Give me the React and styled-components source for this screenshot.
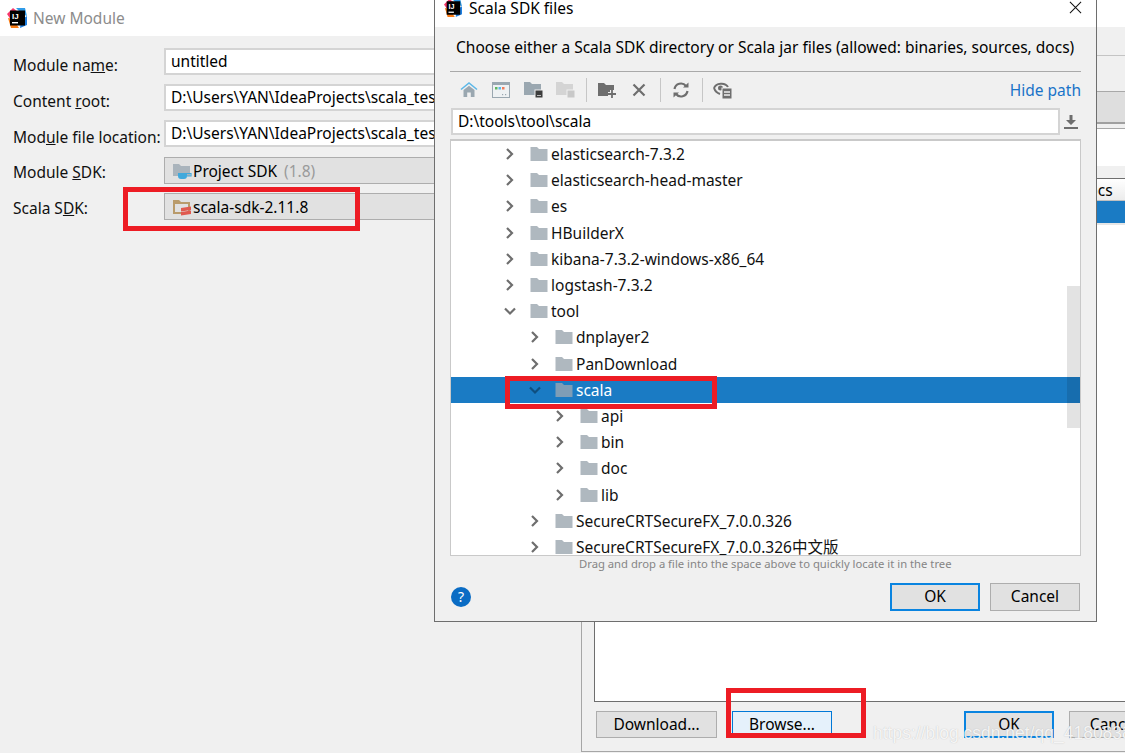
import React from 'react'
import styled, { createGlobalStyle } from 'styled-components'

const GlobalStyle = createGlobalStyle`
  html, body {
    margin: 0;
    padding: 0;
    background: #f0f0f0;
  }
  body {
    font-family: "Noto Sans", "Noto Sans CJK SC", sans-serif;
    font-size: 15.5px;
    color: #000;
  }
`

const Desktop = styled.div`
  position: relative;
  width: 1125px;
  height: 753px;
  overflow: hidden;
`

const Window = styled.div`
  position: absolute;
  display: flex;
  flex-direction: column;
  box-sizing: border-box;
  background: #f0f0f0;
`

const LeftWindow = styled(Window)`
  left: 0;
  top: 0;
  width: 600px;
  height: 753px;
`

const BackWindow = styled(Window)`
  left: 581px;
  top: 0;
  width: 700px;
  height: 752px;
  border-left: 1px solid #a6a6a6;
  border-bottom: 1px solid #a6a6a6;
`

const ModalWindow = styled(Window)`
  left: 434px;
  top: 0;
  width: 663px;
  height: 622px;
  border: 1px solid #6e6e6e;
  border-top: none;
`

const TitleBar = styled.div`
  box-sizing: border-box;
  display: flex;
  align-items: center;
  flex: none;
  height: ${(p) => p.$height}px;
  padding-left: ${(p) => p.$inset}px;
  padding-bottom: ${(p) => p.$lift || 0}px;
  gap: ${(p) => p.$gap || 6}px;
  background: #fff;
  color: ${(p) => p.$color || '#000'};
`

const CloseGlyph = styled.svg`
  margin-left: auto;
  margin-right: 14px;
`

const Form = styled.div`
  display: grid;
  grid-template-columns: 151px 1fr;
  grid-auto-rows: 27px;
  row-gap: 9.2px;
  padding: 12px 0 0 13px;
`

const Label = styled.label`
  padding-top: ${(p) => (p.$tight ? 4.5 : 6)}px;
  white-space: nowrap;
  color: #111;
`

const TextField = styled.div`
  box-sizing: border-box;
  display: flex;
  align-items: center;
  padding-left: 5px;
  padding-bottom: 1px;
  background: #fff;
  border: 2px solid #d4d4d4;
  white-space: nowrap;
`

const Combo = styled.div`
  box-sizing: border-box;
  display: flex;
  align-items: center;
  gap: 1px;
  padding: 1px 0 0 7px;
  background: #e1e1e1;
  border: 1px solid #adadad;
  white-space: nowrap;
`

const Muted = styled.span`
  color: #9a9a9a;
  margin-left: 6px;
`

const Instruction = styled.div`
  flex: none;
  height: 45px;
  display: flex;
  align-items: center;
  padding: 0 0 4px 6px;
  box-sizing: border-box;
  border-bottom: 1px solid #a9a9a9;
  white-space: nowrap;
`

const ModalBody = styled.div`
  display: flex;
  flex-direction: column;
  flex: 1;
  padding: 0 15px;
`

const Toolbar = styled.div`
  flex: none;
  display: flex;
  align-items: center;
  height: 36px;
  padding-left: 3px;
`

const ToolButton = styled.span`
  display: flex;
  align-items: center;
  justify-content: center;
  width: 32px;
  height: 24px;
`

const ToolSeparator = styled.span`
  width: 1px;
  height: 24px;
  margin: 0 4px 0 5px;
  background: #c6c6c6;
`

const LinkText = styled.a`
  margin-left: auto;
  color: #1a73c8;
`

const PathRow = styled.div`
  flex: none;
  display: flex;
  align-items: center;
  height: 27px;
  padding-left: 1px;
`

const PathField = styled(TextField)`
  width: 609px;
  height: 27px;
  padding-left: 5px;
`

const PathAction = styled.span`
  display: flex;
  margin-left: 3px;
`

const Tree = styled.div`
  position: relative;
  flex: none;
  box-sizing: border-box;
  height: 417px;
  margin-top: 4px;
  border: 1px solid #c9c9c9;
  border-top-width: 2px;
  background: #fff;
  overflow: hidden;
`

const Row = styled.div`
  display: flex;
  align-items: center;
  height: 26.2px;
  padding-left: ${(p) => 49 + p.$level * 25}px;
  background: ${(p) => (p.$selected ? '#1a7bc4' : 'transparent')};
  color: ${(p) => (p.$selected ? '#fff' : '#111')};
  white-space: nowrap;
`

const RowIcons = styled.span`
  display: flex;
  align-items: center;
  gap: 10px;
  margin-right: 3px;
`

const ScrollThumb = styled.div`
  position: absolute;
  right: 0;
  top: 145px;
  width: 13px;
  height: 142px;
  background: rgba(0, 0, 0, 0.11);
`

const Hint = styled.div`
  flex: none;
  height: 16px;
  padding-left: 129px;
  font-size: 11.25px;
  line-height: 16px;
  color: #858585;
  white-space: nowrap;
`

const Footer = styled.div`
  flex: none;
  display: flex;
  align-items: center;
  margin-top: 11px;
  padding: 0 1px;
`

const Button = styled.button`
  box-sizing: border-box;
  width: ${(p) => p.$width || 90}px;
  height: ${(p) => p.$height || 27}px;
  padding: 0 0 2px;
  margin-left: ${(p) => p.$gap || 0}px;
  font: inherit;
  color: #000;
  background: ${(p) => (p.$hover ? '#e5f1fb' : '#e1e1e1')};
  border: ${(p) => (p.$primary ? '2px solid #0a84e0' : p.$hover ? '1px solid #0078d7' : '1px solid #adadad')};
`

const HelpBadge = styled.span`
  width: 20px;
  height: 20px;
  border-radius: 50%;
  background: #0a6cc4;
  color: #fff;
  font-size: 14px;
  line-height: 20px;
  text-align: center;
`

const PushRight = styled.span`
  margin-left: auto;
`

const Rule = styled.div`
  flex: none;
  height: 1px;
  margin-top: ${(p) => p.$top}px;
  background: #c4c4c4;
`

const Band = styled.div`
  flex: none;
  box-sizing: border-box;
  height: 33px;
  margin-top: 35px;
  background: #dedede;
  border-top: 1px solid #a8a8a8;
  border-bottom: 2px solid #a0a0a0;
`

const Panel = styled.div`
  flex: none;
  box-sizing: border-box;
  height: 574px;
  margin: 4px 0 0 12px;
  padding-top: 37px;
  background: #fff;
  border-top: 1px solid #a8a8a8;
  border-left: 1px solid #6e6e6e;
  border-bottom: 1px solid #6e6e6e;
`

const TableBar = styled.div`
  height: 12px;
  background: #f0f0f0;
`

const TableHeader = styled.div`
  box-sizing: border-box;
  height: 23px;
  padding-left: 482px;
  line-height: 22px;
  background: linear-gradient(#fff, #ececec);
  border-top: 1px solid #6e6e6e;
  border-bottom: 1px solid #c0c0c0;
`

const TableRow = styled.div`
  height: 22px;
  background: #1a7bc4;
  border-bottom: 2px solid #e6e6e6;
`

const BackFooter = styled.div`
  flex: none;
  display: flex;
  margin-top: 9px;
  padding-left: 14px;
`

const RedBox = styled.div`
  position: absolute;
  box-sizing: border-box;
  left: ${(p) => p.$x}px;
  top: ${(p) => p.$y}px;
  width: ${(p) => p.$w}px;
  height: ${(p) => p.$h}px;
  border: 5px solid #ed1c24;
  pointer-events: none;
`

const Watermark = styled.div`
  position: absolute;
  left: 873px;
  top: 723px;
  font-family: "Liberation Sans", sans-serif;
  font-size: 17.5px;
  white-space: nowrap;
  color: rgba(255, 255, 255, 0.85);
  text-shadow: 0 0 1px rgba(110, 110, 110, 0.4);
`

const IdeaLogo = ({ size = 20 }) => (
  <svg width={size} height={size} viewBox="0 0 20 20">
    <path d="M0 6 L6 0 L11 4 L4 12 Z" fill="#f5376b" />
    <path d="M9 0 H18 L20 8 L15 6 Z" fill="#2f9be8" />
    <path d="M1 10 L4 20 L12 20 L6 11 Z" fill="#f97a12" />
    <path d="M13 20 L20 17 L20 8 L14 12 Z" fill="#1f7fe0" />
    <rect x="3" y="2.5" width="15" height="15" fill="#000" />
    <rect x="5" y="14" width="6" height="1.4" fill="#fff" />
    <text x="5" y="11" fontSize="8" fontWeight="700" fill="#fff" fontFamily="Liberation Sans, sans-serif">IJ</text>
  </svg>
)

const Folder = ({ color = '#afb8bf' }) => (
  <svg width="18" height="18" viewBox="0 0 18 18">
    <path d="M0.5 2 H7 L9 4 H17.5 V16 H0.5 Z" fill={color} />
  </svg>
)

const Chevron = ({ open, color = '#6e6e6e' }) => (
  <svg width="20" height="18" viewBox="0 0 20 18" fill="none" stroke={color} strokeWidth="2.2">
    {open ? <path d="M5 6.5 L10 11.5 L15 6.5" /> : <path d="M7 4 L12 9 L7 14" />}
  </svg>
)

const ProjectFolder = () => (
  <svg width="20" height="20" viewBox="0 0 20 20">
    <path d="M1 3 H7 L9 5 H18 V15 H1 Z" fill="#aab4bc" />
    <path d="M6 12 H15 V15 A3 3 0 0 1 12 18 H9 A3 3 0 0 1 6 15 Z" fill="#40a9dc" />
    <path d="M15 12.5 H19 V15 H15" fill="none" stroke="#40a9dc" strokeWidth="1.2" />
  </svg>
)

const ScalaFolder = () => (
  <svg width="20" height="20" viewBox="0 0 20 20">
    <path d="M1 3 H7 L9 5 H18 V17 H1 Z M3 7 V15 H16 V7 Z" fill="#b99b6b" fillRule="evenodd" />
    <path d="M9 11 L19 9.5 V13 L9 14.5 Z" fill="#e05a50" />
    <path d="M9 15 L19 13.5 V17 L9 18.5 Z" fill="#e05a50" />
  </svg>
)

const HomeIcon = () => (
  <svg width="18" height="18" viewBox="0 0 18 18">
    <path d="M1 8.5 L9 2 L17 8.5" fill="none" stroke="#5db8e8" strokeWidth="1.6" />
    <path d="M3.5 9 L9 4.8 L14.5 9 V16 H10.8 V11.5 H7.2 V16 H3.5 Z" fill="#9aa7b0" />
  </svg>
)

const DesktopIcon = () => (
  <svg width="18" height="16" viewBox="0 0 18 16">
    <rect x="0.5" y="0.5" width="17" height="15" fill="#eef1f3" stroke="#9aa7b0" />
    <rect x="0.5" y="0.5" width="17" height="2.5" fill="#9aa7b0" />
    <rect x="3" y="5" width="2.5" height="2.5" fill="#5fb760" />
    <rect x="6.5" y="5" width="2.5" height="2.5" fill="#5db8e8" />
    <rect x="10" y="5" width="2.5" height="2.5" fill="#ef7b5a" />
    <rect x="10" y="12" width="1.2" height="1.2" fill="#9aa7b0" />
    <rect x="13" y="12" width="1.2" height="1.2" fill="#9aa7b0" />
  </svg>
)

const FolderBadge = ({ folder, badge, inner }) => (
  <svg width="20" height="18" viewBox="0 0 20 18">
    <path d="M1 1 H7 L9 3 H18 V14 H1 Z" fill={folder} />
    <rect x="12" y="9" width="8" height="8" fill={badge} stroke="#f0f0f0" />
    {inner && <rect x="14" y="14" width="4" height="1" fill={inner} />}
  </svg>
)

const NewFolderIcon = () => (
  <svg width="20" height="18" viewBox="0 0 20 18">
    <path d="M1 2 H7 L9 4 H17 V15 H1 Z" fill="#6e6e6e" />
    <path d="M11 13 H19 M15 9 V17" stroke="#f0f0f0" strokeWidth="4" />
    <path d="M11 13 H19 M15 9 V17" stroke="#6e6e6e" strokeWidth="1.8" />
  </svg>
)

const DeleteIcon = () => (
  <svg width="14" height="14" viewBox="0 0 14 14" stroke="#6e6e6e" strokeWidth="2.2">
    <path d="M1.5 1.5 L12.5 12.5 M12.5 1.5 L1.5 12.5" />
  </svg>
)

const RefreshIcon = () => (
  <svg width="18" height="18" viewBox="0 0 18 18" fill="none" stroke="#6e6e6e" strokeWidth="2.2">
    <path d="M2.5 8 A6.5 6.5 0 0 1 14 5" />
    <path d="M15.5 10 A6.5 6.5 0 0 1 4 13" />
    <path d="M11 6.5 H16.5 V1.5 Z" fill="#6e6e6e" stroke="none" />
    <path d="M7 11.5 H1.5 V16.5 Z" fill="#6e6e6e" stroke="none" />
  </svg>
)

const ShowHiddenIcon = () => (
  <svg width="20" height="20" viewBox="0 0 20 20">
    <path d="M1 8 C3 3 12 2 15 7" fill="none" stroke="#6e6e6e" strokeWidth="2" />
    <path d="M1 8 C2 11 4 13 7 14" fill="none" stroke="#6e6e6e" strokeWidth="2" />
    <circle cx="7.5" cy="8" r="2.5" fill="#6e6e6e" />
    <rect x="9" y="8" width="10" height="11" fill="#6e6e6e" stroke="#f0f0f0" />
    <path d="M11 12 H17 M11 15 H17" stroke="#f0f0f0" strokeWidth="1.3" />
  </svg>
)

const DownloadIcon = () => (
  <svg width="16" height="16" viewBox="0 0 16 16" fill="#6e6e6e">
    <path d="M6.5 1 H9.5 V6 H13 L8 11 L3 6 H6.5 Z" />
    <rect x="1" y="13" width="14" height="2" />
  </svg>
)

const treeRows = [
  { level: 0, name: 'elasticsearch-7.3.2' },
  { level: 0, name: 'elasticsearch-head-master' },
  { level: 0, name: 'es' },
  { level: 0, name: 'HBuilderX' },
  { level: 0, name: 'kibana-7.3.2-windows-x86_64' },
  { level: 0, name: 'logstash-7.3.2' },
  { level: 0, name: 'tool', open: true },
  { level: 1, name: 'dnplayer2' },
  { level: 1, name: 'PanDownload' },
  { level: 1, name: 'scala', open: true, selected: true },
  { level: 2, name: 'api' },
  { level: 2, name: 'bin' },
  { level: 2, name: 'doc' },
  { level: 2, name: 'lib' },
  { level: 1, name: 'SecureCRTSecureFX_7.0.0.326' },
  { level: 1, name: 'SecureCRTSecureFX_7.0.0.326中文版' },
]

const App = () => (
  <Desktop>
    <GlobalStyle />

    <LeftWindow>
      <TitleBar $height={36} $inset={7} $color="#8c8c8c">
        <IdeaLogo />
        New Module
      </TitleBar>
      <Form>
        <Label>Module na<u>m</u>e:</Label>
        <TextField>untitled</TextField>
        <Label>Content <u>r</u>oot:</Label>
        <TextField>D:\Users\YAN\IdeaProjects\scala_test</TextField>
        <Label>Mod<u>u</u>le file location:</Label>
        <TextField>D:\Users\YAN\IdeaProjects\scala_test</TextField>
        <Label $tight>Module <u>S</u>DK:</Label>
        <Combo>
          <ProjectFolder />
          Project SDK <Muted>(1.8)</Muted>
        </Combo>
        <Label $tight>Scala S<u>D</u>K:</Label>
        <Combo>
          <ScalaFolder />
          scala-sdk-2.11.8
        </Combo>
      </Form>
    </LeftWindow>

    <BackWindow>
      <TitleBar $height={27} $inset={0} />
      <Rule $top={28} />
      <Band />
      <Panel>
        <TableBar />
        <TableHeader>Docs</TableHeader>
        <TableRow />
      </Panel>
      <BackFooter>
        <Button $width={121}>Download...</Button>
        <Button $width={100} $gap={15} $hover>Browse...</Button>
        <Button $primary $gap={132}>OK</Button>
        <Button $gap={15}>Cancel</Button>
      </BackFooter>
    </BackWindow>

    <ModalWindow>
      <TitleBar $height={27} $inset={9} $lift={12} $gap={7}>
        <IdeaLogo size={18} />
        Scala SDK files
        <CloseGlyph width="13" height="13" viewBox="0 0 14 14" stroke="#111" strokeWidth="1.1">
          <path d="M1 1 L13 13 M13 1 L1 13" />
        </CloseGlyph>
      </TitleBar>
      <ModalBody>
        <Instruction>Choose either a Scala SDK directory or Scala jar files (allowed: binaries, sources, docs)</Instruction>
        <Toolbar>
          <ToolButton><HomeIcon /></ToolButton>
          <ToolButton><DesktopIcon /></ToolButton>
          <ToolButton><FolderBadge folder="#9aa7b0" badge="#3c3c3c" inner="#bbb" /></ToolButton>
          <ToolButton><FolderBadge folder="#d4d4d4" badge="#c8c8c8" /></ToolButton>
          <ToolSeparator />
          <ToolButton><NewFolderIcon /></ToolButton>
          <ToolButton><DeleteIcon /></ToolButton>
          <ToolSeparator />
          <ToolButton><RefreshIcon /></ToolButton>
          <ToolSeparator />
          <ToolButton><ShowHiddenIcon /></ToolButton>
          <LinkText>Hide path</LinkText>
        </Toolbar>
        <PathRow>
          <PathField>D:\tools\tool\scala</PathField>
          <PathAction><DownloadIcon /></PathAction>
        </PathRow>
        <Tree>
          {treeRows.map((row) => (
            <Row key={row.name} $level={row.level} $selected={row.selected}>
              <RowIcons>
                <Chevron open={row.open} color={row.selected ? '#0f4f80' : '#6e6e6e'} />
                <Folder color={row.selected ? '#7e9db6' : '#afb8bf'} />
              </RowIcons>
              {row.name}
            </Row>
          ))}
          <ScrollThumb />
        </Tree>
        <Hint>Drag and drop a file into the space above to quickly locate it in the tree</Hint>
        <Footer>
          <HelpBadge>?</HelpBadge>
          <PushRight />
          <Button $primary $height={28}>OK</Button>
          <Button $gap={10} $height={28}>Cancel</Button>
        </Footer>
      </ModalBody>
    </ModalWindow>

    <RedBox $x={123} $y={187} $w={237} $h={44} />
    <RedBox $x={505} $y={376} $w={212} $h={33} />
    <RedBox $x={726} $y={688} $w={140} $h={50} />
    <Watermark>https://blog.csdn.net/qq_41808387</Watermark>
  </Desktop>
)

export default App
